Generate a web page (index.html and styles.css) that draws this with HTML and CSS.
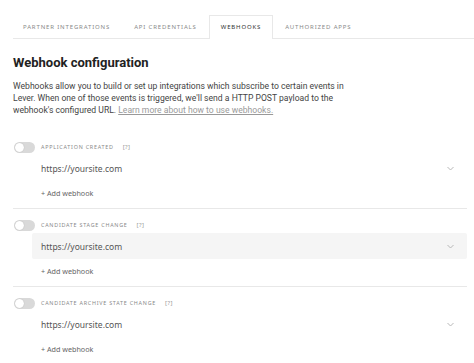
FILE: index.html
```html
<!DOCTYPE html>
<html lang="en">
<head>
    <meta charset="UTF-8">
    <meta name="viewport" content="width=device-width, initial-scale=1.0">
    <title>Webhooks - Integrations</title>
    <link rel="stylesheet" href="styles.css">
</head>
<body>
    <div class="page">
        <nav class="tabs">
            <a class="tab">Partner integrations</a>
            <a class="tab">API credentials</a>
            <a class="tab active">Webhooks</a>
            <a class="tab">Authorized apps</a>
        </nav>

        <h2 class="title">Webhook configuration</h2>
        <p class="intro">Webhooks allow you to build or set up integrations which subscribe to certain events in Lever. When one of those events is triggered, we'll send a HTTP POST payload to the webhook's configured URL. <a class="link">Learn more about how to use webhooks.</a></p>

        <div class="hook">
            <div class="hook-head">
                <span class="toggle"></span>
                <span class="hook-label">Application created</span>
                <span class="help">[?]</span>
            </div>
            <div class="url-row">
                <span class="url">https://yoursite.com</span>
                <svg class="chevron" width="7" height="5" viewBox="0 0 7 5"><path d="M0.5 1 L3.5 4 L6.5 1" fill="none" stroke="#b8b8b8" stroke-width="1"/></svg>
            </div>
            <div class="add-row">+ Add webhook</div>
        </div>

        <div class="hook">
            <div class="hook-head">
                <span class="toggle"></span>
                <span class="hook-label">Candidate stage change</span>
                <span class="help">[?]</span>
            </div>
            <div class="url-row hover">
                <span class="url">https://yoursite.com</span>
                <svg class="chevron" width="7" height="5" viewBox="0 0 7 5"><path d="M0.5 1 L3.5 4 L6.5 1" fill="none" stroke="#b8b8b8" stroke-width="1"/></svg>
            </div>
            <div class="add-row">+ Add webhook</div>
        </div>

        <div class="hook">
            <div class="hook-head">
                <span class="toggle"></span>
                <span class="hook-label">Candidate archive state change</span>
                <span class="help">[?]</span>
            </div>
            <div class="url-row">
                <span class="url">https://yoursite.com</span>
                <svg class="chevron" width="7" height="5" viewBox="0 0 7 5"><path d="M0.5 1 L3.5 4 L6.5 1" fill="none" stroke="#b8b8b8" stroke-width="1"/></svg>
            </div>
            <div class="add-row">+ Add webhook</div>
        </div>
    </div>
</body>
</html>
```
FILE: styles.css
```css
body { font-family: 'Noto Sans', 'Open Sans', sans-serif; color: #333; background: #fff; margin: 0; }
.page { padding: 15px 7px 0 13px; }

.tabs { display: flex; border-bottom: 1px solid #e8e8e8; margin-right: -7px; }
.tab { display: block; padding: 0 11px; height: 22px; line-height: 23px; font-size: 6px; letter-spacing: 0.85px; text-transform: uppercase; color: #8a8a8a; border: 1px solid transparent; border-bottom: none; margin-bottom: -1px; }
.tab:first-child { padding-left: 9px; }
.tab.active { color: #333; border-color: #e8e8e8; background: #fff; height: 23px; }

.title { font-family: Roboto, 'Noto Sans', sans-serif; font-size: 13px; font-weight: 700; color: #222; margin: 14px 0 0; line-height: 20px; }
.intro { font-family: Roboto, 'Noto Sans', sans-serif; max-width: 350px; font-size: 8.6px; line-height: 12px; color: #444; margin: 7px 0 0; }
.link { display: inline-block; color: #999; text-decoration: underline; }

.hook { border-bottom: 1px solid #e8e8e8; padding: 10px 0 3px; }
.intro + .hook { margin-top: 15px; }
.hook-head { display: flex; align-items: center; height: 12px; }
.toggle { position: relative; width: 21px; height: 11px; border-radius: 6px; background: #d9d9d9; margin-left: 1px; }
.toggle::after { content: ''; position: absolute; left: 1px; top: 1px; width: 9px; height: 9px; border-radius: 50%; background: #fff; box-shadow: 0 0 1px rgba(0,0,0,0.25); }
.hook-label { margin-left: 6px; font-size: 5.4px; letter-spacing: 0.75px; text-transform: uppercase; color: #8a8a8a; }
.help { margin-left: 9px; font-size: 6px; letter-spacing: 0.4px; color: #999; }

.url-row { display: flex; align-items: center; justify-content: space-between; height: 26px; margin: 2px 0 0 19px; padding: 0 13px 0 9px; border-radius: 2px; }
.url-row.hover { background: #f5f5f5; }
.url { font-size: 8.5px; color: #555; }
.chevron { display: block; }
.add-row { height: 24px; line-height: 24px; padding-left: 28px; font-size: 7.2px; color: #666; }
```
